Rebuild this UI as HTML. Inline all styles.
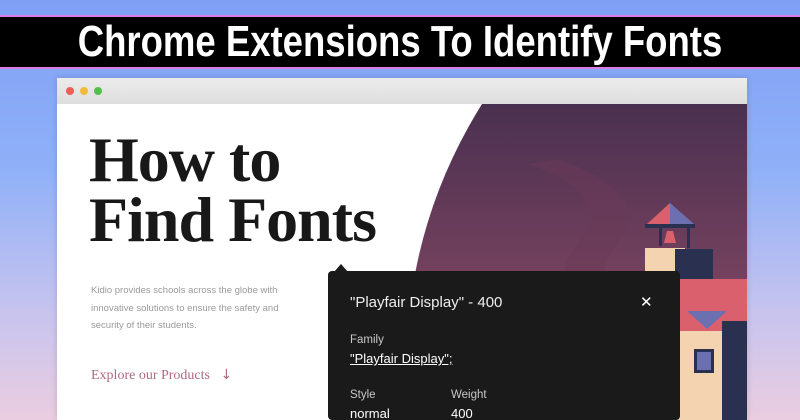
<!DOCTYPE html>
<html style="overflow:hidden;height:420px"><head><style>
body{margin:0;width:800px;height:420px;overflow:hidden;position:relative;font-family:"Liberation Sans",sans-serif;background:linear-gradient(180deg,#7f9ff5 0%,#8fb0f8 40%,#c8c4ee 75%,#eacde0 100%);}
.topbar{position:absolute;left:0;top:15px;width:800px;height:54px;background:#000;border-top:2px solid #d77ee0;border-bottom:2px solid #d77ee0;box-sizing:border-box;overflow:hidden}
.topbar div{color:#fff;font-family:"Liberation Sans",sans-serif;font-weight:bold;font-size:44px;text-align:center;line-height:50px;transform:scaleX(0.83);white-space:nowrap;width:800px}
.win{position:absolute;left:57px;top:78px;width:690px;height:342px;background:#fff;overflow:hidden;box-shadow:0 0 6px rgba(0,0,0,.15);}
.tb{height:26px;background:linear-gradient(#ececec,#dedede);position:relative}
.dot{position:absolute;top:9px;width:8px;height:8px;border-radius:50%}
h1{position:absolute;left:32px;top:52px;margin:0;font-family:"Liberation Serif",serif;font-weight:bold;font-size:64px;line-height:60px;color:#181818;letter-spacing:-1px}
.p{position:absolute;left:34px;top:204px;font-size:9.5px;line-height:17.5px;color:#9a9a9a;width:200px}
.ex{position:absolute;left:34px;top:289px;font-family:"Liberation Serif",serif;font-size:14px;color:#b06a80}
.pop{position:absolute;left:328px;top:271px;width:352px;height:160px;background:#1b1a1b;border-radius:4px;color:#fff}
.pop .t{position:absolute;left:22px;top:23px;font-size:15px;color:#eee}
.pop .x{position:absolute;left:312px;top:22px;font-size:15px}
.pop .l{position:absolute;font-size:11.5px;color:#c8c8c8}
.pop .v{position:absolute;font-size:13px;color:#fff}
</style></head><body>
<div class="topbar"><div>Chrome Extensions To Identify Fonts</div></div>
<div class="win">
<div class="tb"><span class="dot" style="left:9px;background:#ec5f57"></span><span class="dot" style="left:23px;background:#f2bc3a"></span><span class="dot" style="left:37px;background:#52c04a"></span></div>
<svg width="690" height="330" style="position:absolute;left:0;top:26px">
<defs><linearGradient id="g" x1="0" y1="0" x2="0" y2="1"><stop offset="0" stop-color="#4a3050"/><stop offset="0.6" stop-color="#7a4460"/><stop offset="1" stop-color="#8e4d62"/></linearGradient></defs>
<path d="M425,0 Q375,80 358,170 L350,330 L690,330 L690,0 Z" fill="url(#g)"/>
<path d="M470,60 Q560,90 520,140 Q480,190 560,230 L600,230 Q520,190 560,140 Q600,90 500,55Z" fill="#6a3a58" opacity="0.5"/>
<g transform="translate(20,-23)">
<polygon points="570,143 593,122 593,143" fill="#d9606c"/>
<polygon points="593,122 617,143 593,143" fill="#6c70b0"/>
<rect x="568" y="143" width="50" height="4" fill="#2a3150"/>
<rect x="582" y="145" width="3" height="20" fill="#2a3150"/>
<rect x="610" y="145" width="3" height="22" fill="#2a3150"/>
<path d="M590,150 h6 l3,12 h-12z" fill="#d9606c"/>
<rect x="568" y="167" width="40" height="60" fill="#f4d4b0"/>
<rect x="598" y="168" width="38" height="30" fill="#2a3150"/>
<polygon points="575,198 690,198 690,250 600,250" fill="#d9606c"/>
<polygon points="610,230 650,230 630,248" fill="#6c70b0"/>
<rect x="580" y="250" width="65" height="100" fill="#f4d4b0"/>
<rect x="645" y="240" width="45" height="110" fill="#2a3150"/>
<rect x="617" y="268" width="20" height="24" fill="#2a3150"/><rect x="620" y="271" width="14" height="18" fill="#6c70b0"/>
<rect x="588" y="268" width="12" height="24" fill="#6c70b0"/>
</g>
</svg>
<h1>How to<br>Find Fonts</h1>
<div class="p">Kidio provides schools across the globe with innovative solutions to ensure the safety and security of their students.</div>
<div class="ex">Explore our Products &nbsp;&nbsp;<span style="font-family:'DejaVu Sans'">↓</span></div>
</div>
<div style="position:absolute;left:334px;top:264px;width:0;height:0;border-left:7px solid transparent;border-right:7px solid transparent;border-bottom:8px solid #1b1a1b"></div>
<div class="pop" style="height:149px">
<div class="t">"Playfair Display" - 400</div>
<div class="x">✕</div>
<div class="l" style="left:22px;top:63px">Family</div>
<div class="v" style="left:22px;top:80px;text-decoration:underline">"Playfair Display";</div>
<div class="l" style="left:22px;top:118px">Style</div>
<div class="v" style="left:22px;top:135px">normal</div>
<div class="l" style="left:123px;top:118px">Weight</div>
<div class="v" style="left:123px;top:135px">400</div>
</div>
</body></html>
